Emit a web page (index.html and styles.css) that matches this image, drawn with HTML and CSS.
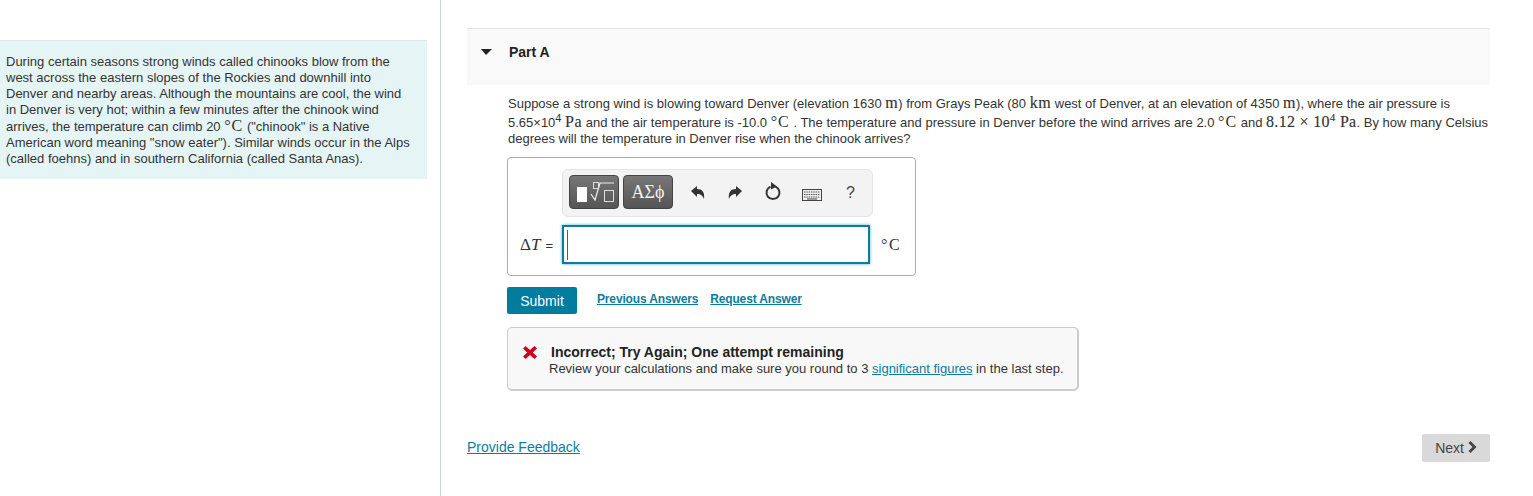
FILE: index.html
```html
<!DOCTYPE html>
<html lang="en">
<head>
<meta charset="utf-8">
<title>Part A</title>
<link rel="stylesheet" href="styles.css">
</head>
<body>
<div class="page">
  <aside class="side">
    <div class="intro">
      During certain seasons strong winds called chinooks blow from the<br>
      west across the eastern slopes of the Rockies and downhill into<br>
      Denver and nearby areas. Although the mountains are cool, the wind<br>
      in Denver is very hot; within a few minutes after the chinook wind<br>
      arrives, the temperature can climb 20 <span class="m deg">°C</span> ("chinook" is a Native<br>
      American word meaning "snow eater"). Similar winds occur in the Alps<br>
      (called foehns) and in southern California (called Santa Anas).
    </div>
  </aside>
  <main class="main">
    <header class="part-head">
      <span class="tri"></span>
      <h2 class="part-title">Part A</h2>
    </header>
    <div class="question">
      <div class="ql ql1">Suppose a strong wind is blowing toward Denver (elevation 1630 <span class="m b">m</span>) from Grays Peak (80 <span class="m b">km</span> west of Denver, at an elevation of 4350 <span class="m b">m</span>), where the air pressure is</div>
      <div class="ql ql2">5.65×10<sup>4</sup> <span class="m b">Pa</span> and the air temperature is -10.0 <span class="m deg">°C</span> . The temperature and pressure in Denver before the wind arrives are 2.0 <span class="m deg">°C</span> and <span class="m b tight">8.12 × 10<sup>4</sup> Pa</span>. By how many Celsius</div>
      <div class="ql ql3">degrees will the temperature in Denver rise when the chinook arrives?</div>
    </div>
    <section class="answer">
      <div class="toolbar">
        <span class="tool tool-a">
          <svg width="44" height="26" viewBox="0 0 44 26"><rect x="5" y="8" width="10" height="15" fill="#fff"/><rect x="21.500" y="3.500" width="5" height="6" fill="none" stroke="#ddd"/><path d="M19 15l4 6 5-17h14" fill="none" stroke="#eee" stroke-width="1.200"/><rect x="32.500" y="11.500" width="9" height="11" fill="none" stroke="#ddd"/></svg>
        </span>
        <span class="tool tool-b">ΑΣϕ</span>
        <svg class="ico ico-undo" width="16" height="16" viewBox="0 0 16 16"><path d="M1 6l6-5v3c5 0 8 3 7 10-1-3-3-5-7-5v3z" fill="#333"/></svg>
        <svg class="ico ico-redo" width="16" height="16" viewBox="0 0 16 16"><path d="M15 6L9 1v3C4 4 1 7 2 14c1-3 3-5 7-5v3z" fill="#333"/></svg>
        <svg class="ico ico-reload" width="18" height="20" viewBox="0 0 18 20"><path d="M11.500 4.600a6.500 6.500 0 1 1-5 0" fill="none" stroke="#333" stroke-width="2"/><path d="M7 0l6 4.500-6 3z" fill="#333"/></svg>
        <svg class="ico ico-keys" width="20" height="12" viewBox="0 0 20 12"><rect x=".5" y=".5" width="19" height="11" fill="#eee" stroke="#444"/><path d="M2 3h16M2 5.500h16M2 8h16" stroke="#555" stroke-dasharray="1.500 .8"/><path d="M5 10h10" stroke="#444"/></svg>
        <span class="help">?</span>
      </div>
      <div class="entry">
        <span class="label"><span class="m delta">Δ<i>T</i></span><span class="eq">=</span></span>
        <span class="field"><span class="caret"></span></span>
        <span class="unit m">°C</span>
      </div>
    </section>
    <div class="actions">
      <button class="submit" type="button">Submit</button>
      <a class="act" href="#">Previous Answers</a>
      <a class="act" href="#">Request Answer</a>
    </div>
    <div class="feedback">
      <svg class="x" width="14" height="13" viewBox="0 0 14 13"><path d="M0 2.500L2.500 0 7 4l4.500-4L14 2.500 9.800 6.500 14 10.500 11.500 13 7 9l-4.500 4L0 10.500l4.200-4z" fill="#d0021b"/></svg>
      <div class="fb-text">
        <div class="fb-title">Incorrect; Try Again; One attempt remaining</div>
        <div class="fb-body">Review your calculations and make sure you round to 3 <a href="#">significant figures</a> in the last step.</div>
      </div>
    </div>
    <footer class="foot">
      <a class="provide" href="#">Provide Feedback</a>
      <button class="next" type="button">Next <svg width="9" height="12" viewBox="0 0 9 12"><path d="M.500 2L2.500 0 8.500 6l-6 6-2-2 4-4z" fill="#444"/></svg></button>
    </footer>
  </main>
</div>
</body>
</html>
```
FILE: styles.css
```css
* { box-sizing: border-box; }
html, body { margin: 0; padding: 0; height: 100%; background: #fff; overflow: hidden; }
body { font-family: "Liberation Sans", Arial, sans-serif; font-size: 13px; color: #333; }
.page { display: flex; height: 496px; }
.side { width: 441px; flex: none; border-right: 1px solid #c5d3e3; padding-top: 40px; }
.intro { width: 427px; height: 139px; background: #e5f5f6; border-top: 1px solid #dde6ea; padding: 13px 0 0 6px; line-height: 16px; white-space: nowrap; }
.m { font-family: "Liberation Serif", "DejaVu Serif", serif; font-size: 16px; }
.deg { letter-spacing: 1px; }
.b { letter-spacing: .5px; -webkit-text-stroke: .15px #333; }
.tight { letter-spacing: .3px; }
.main { flex: none; width: 1023px; margin-left: 26px; padding-top: 28px; }
.part-head { height: 57px; background: #f9f9f9; border-top: 1px solid #e3e3e3; display: flex; align-items: flex-start; padding: 15px 0 0 14px; }
.tri { width: 0; height: 0; border-left: 5px solid transparent; border-right: 6px solid transparent; border-top: 6px solid #222; margin-top: 5px; }
.part-title { margin: 0 0 0 17px; font-size: 14px; line-height: 16px; font-weight: 700; color: #222; }
.question { padding-left: 41px; margin-top: 9px; white-space: nowrap; }
.ql { line-height: 17px; }
.ql1 { height: 19px; }
.ql2 { height: 17px; }
.ql3 { height: 18px; }
sup { font-size: 11px; line-height: 0; }
.answer { margin: 9px 0 0 40px; width: 409px; height: 119px; border: 1px solid #aaa; border-radius: 4px; padding-top: 11px; }
.toolbar { margin-left: 54px; width: 311px; height: 48px; background: #f3f3f3; border: 1px solid #e4e4e4; border-radius: 6px; display: flex; align-items: flex-start; padding: 5px 0 0 6px; }
.tool { height: 34px; border-radius: 4px; background: linear-gradient(#777, #555); border: 1px solid #444; color: #f2f2f2; display: flex; align-items: center; justify-content: center; }
.tool-a { width: 50px; }
.tool-b { width: 50px; margin-left: 4px; font-family: "Liberation Serif", "DejaVu Serif", serif; font-size: 18px; }
.ico { flex: none; }
.ico-undo { margin: 10px 0 0 17px; }
.ico-redo { margin: 10px 0 0 21px; }
.ico-reload { margin: 7px 0 0 21px; }
.ico-keys { margin: 14px 0 0 20px; }
.help { margin: 8px 0 0 24px; font-size: 16px; line-height: 20px; color: #444; }
.entry { display: flex; align-items: center; margin-top: 8px; height: 39px; }
.label { width: 54px; padding-left: 12px; white-space: nowrap; font-size: 13px; display: flex; align-items: baseline; }
.delta { font-size: 17px; }
.eq { margin-left: 5px; }
.field { width: 308px; height: 39px; border: 2px solid #0a7d9f; box-shadow: 0 0 3px #5aa9c0; display: flex; align-items: center; padding-left: 3px; background: #fff; }
.caret { width: 1px; height: 30px; background: #3a5fb0; }
.unit { margin-left: 11px; font-size: 16px; letter-spacing: 1.5px; }
.actions { display: flex; align-items: flex-start; margin: 11px 0 0 40px; }
.submit { width: 70px; height: 27px; background: #007c9f; color: #fff; border: 0; border-radius: 2px; font: 14px "Liberation Sans", Arial, sans-serif; padding: 0; }
.act { font-size: 12px; font-weight: 700; line-height: 14px; letter-spacing: -.15px; color: #0a7d9f; margin: 5px 0 0 12px; }
.submit + .act { margin-left: 20px; }
.feedback { margin: 13px 0 0 40px; width: 572px; height: 64px; background: #f8f8f8; border: 1px solid #ccc; border-right-width: 2px; border-bottom-width: 2px; border-radius: 5px; display: flex; align-items: flex-start; padding: 16px 0 0 15px; }
.x { flex: none; margin-top: 2px; }
.fb-text { margin-left: 12px; line-height: 16px; white-space: nowrap; }
.fb-title { font-size: 14px; font-weight: 700; color: #222; margin-left: 2px; }
.fb-body { margin-top: 1px; }
.fb-body a { color: #0a7d9f; }
.foot { display: flex; justify-content: space-between; align-items: flex-start; margin-top: 43px; }
.provide { font-size: 14px; color: #0a7d9f; margin-top: 5px; line-height: 16px; }
.next { width: 68px; height: 28px; background: #d9d9d9; border: 0; border-radius: 2px; color: #444; font: 14px "Liberation Sans", Arial, sans-serif; padding: 0; }
```
